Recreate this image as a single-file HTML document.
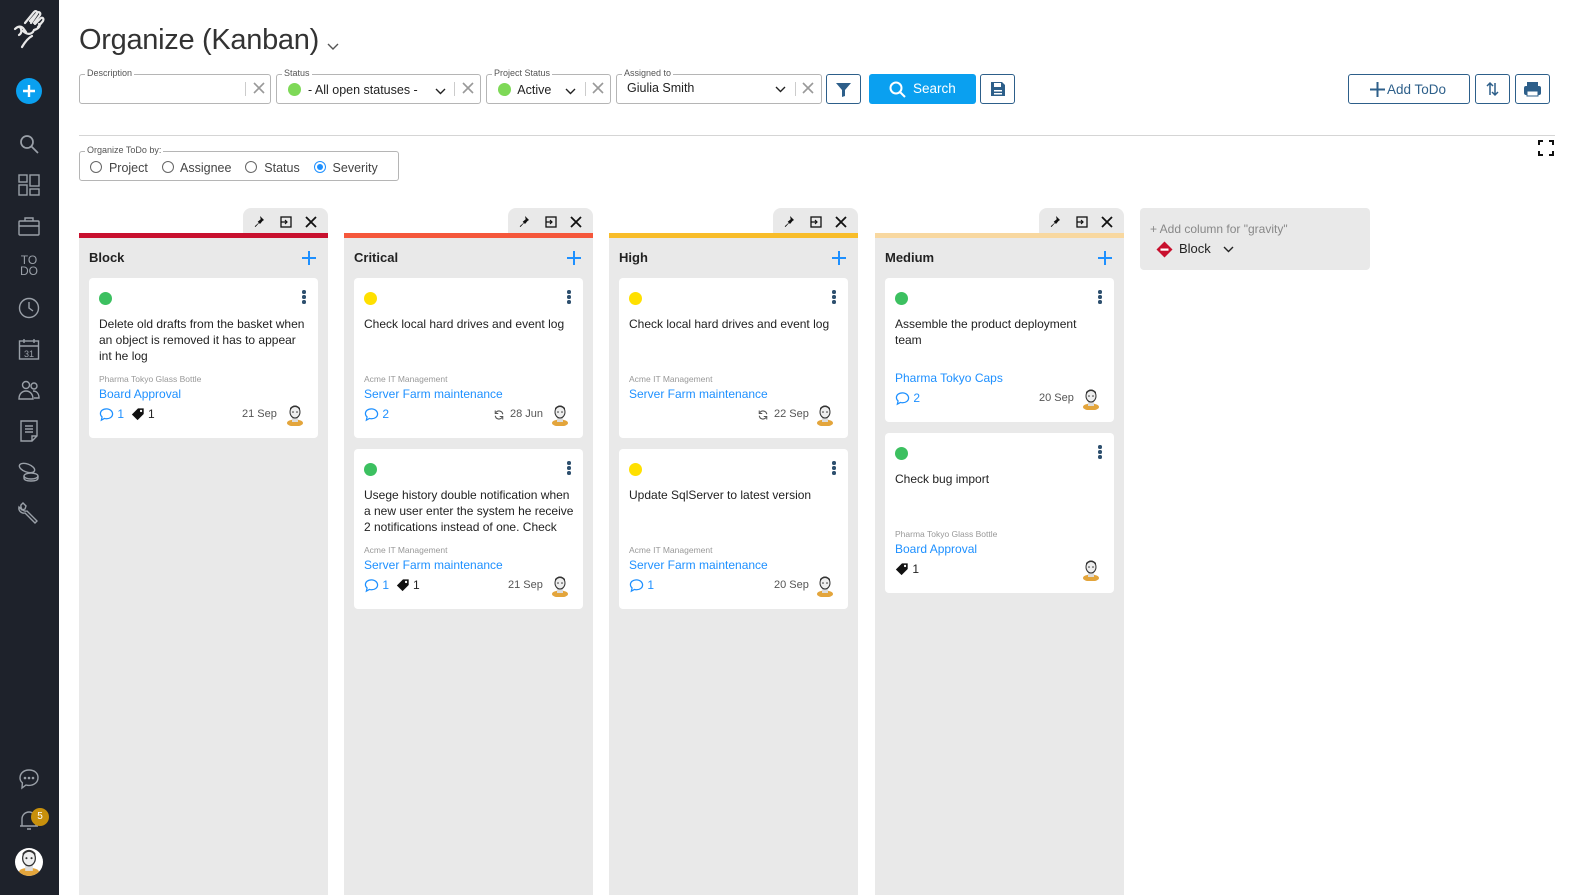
<!DOCTYPE html>
<html><head><meta charset="utf-8"><style>
*{box-sizing:border-box;margin:0;padding:0}
body{width:1572px;height:895px;overflow:hidden;background:#fff;font-family:"Liberation Sans",sans-serif;color:#222;position:relative}
.abs{position:absolute}
.side{left:0;top:0;width:59px;height:895px;background:#1e222b}
.si{position:absolute;left:18px;width:22px;height:22px}
.fld{position:absolute;top:74px;height:30px;border:1px solid #b5b5b5;border-radius:3px}
.fld .lb{position:absolute;top:-7px;left:5px;background:#fff;font-size:9px;color:#555;padding:0 2px;line-height:11px}
.fld .v{position:absolute;top:8px;font-size:12.5px;color:#222}
.gdot{display:inline-block;width:13px;height:13px;border-radius:50%;background:#7ed957;vertical-align:-2px}
.x{position:absolute;top:6px;width:14px;height:14px}
.sep{position:absolute;top:7px;width:1px;height:14px;background:#ccc}
.btn{position:absolute;top:74px;height:30px;border:1px solid #2d5f8a;border-radius:3px;background:#fff}
.col{position:absolute;top:233px;width:249px;height:662px;background:#e9e9e9}
.bar{position:absolute;left:0;top:0;width:249px;height:5px}
.tab{position:absolute;top:208px;width:85px;height:25px;background:#e9e9e9;border-radius:8px 8px 0 0}
.ch{position:absolute;left:10px;top:17px;font-size:13px;font-weight:bold;color:#222}
.cp{position:absolute;right:11px;top:17px;width:16px;height:16px}
.card{position:absolute;left:10px;width:229px;background:#fff;border-radius:4px}
.dot{position:absolute;left:10px;top:14px;width:13px;height:13px;border-radius:50%}
.keb{position:absolute;right:12px;top:12px;width:4px}
.keb i{display:block;width:3.5px;height:3.5px;border-radius:50%;background:#2d4f6e;margin-bottom:1.5px}
.tt{position:absolute;left:10px;top:38px;width:214px;font-size:12px;line-height:16px;color:#222}
.pj{position:absolute;left:10px;font-size:8.5px;color:#999}
.ln{position:absolute;left:10px;font-size:12px;color:#1e90ff}
.ft{position:absolute;left:10px;font-size:12px;color:#1e90ff;height:16px;display:flex;align-items:center}
.dt{position:absolute;font-size:11px;color:#555}
.av{position:absolute;right:14px;width:18px;height:22px}
.rd{display:inline-block;width:12px;height:12px;border:1px solid #666;border-radius:50%;vertical-align:-1px}
</style></head><body>
<svg width="0" height="0" style="position:absolute">
<defs>
<symbol id="av" viewBox="0 0 18 22"><ellipse cx="9" cy="19" rx="8" ry="3.5" fill="#e3a53c"/><rect x="6" y="13" width="6" height="5" fill="#ddd"/><ellipse cx="9" cy="8" rx="5" ry="6" fill="#eee" stroke="#333" stroke-width="1"/><path d="M4 6 Q9 0 14 6 L14 4 Q9 -1 4 4Z" fill="#333"/><circle cx="7" cy="8" r=".8" fill="#333"/><circle cx="11" cy="8" r=".8" fill="#333"/></symbol>
<symbol id="cm" viewBox="0 0 16 16"><path d="M8 2C4 2 1.5 4.3 1.5 7c0 1.5.7 2.7 1.8 3.6L2.5 14l3.3-1.8c.7.2 1.4.3 2.2.3 4 0 6.5-2.3 6.5-5S12 2 8 2z" fill="none" stroke="#1e90ff" stroke-width="1.3"/></symbol>
<symbol id="tag" viewBox="0 0 16 16"><path d="M8 1.5h6.5V8L7.5 15 1 8.5z" fill="#111"/><circle cx="11.5" cy="4.5" r="1.3" fill="#fff"/></symbol>
<symbol id="rf" viewBox="0 0 16 16"><path d="M13 7A5 5 0 0 0 3.8 5M3 9a5 5 0 0 0 9.2 2" fill="none" stroke="#555" stroke-width="1.4"/><path d="M3 2v4h4M13 14v-4H9" fill="none" stroke="#555" stroke-width="1.4"/></symbol>
<symbol id="xx" viewBox="0 0 14 14"><path d="M2 2L12 12M12 2L2 12" stroke="#999" stroke-width="1.6"/></symbol>
<symbol id="tabs" viewBox="0 0 85 25"><path d="M17 8l4 4-1.5 1-2.5 3-1 -1-3.5 4-.8-.8 4-3.5-1-1 3-2.5z" fill="#111"/><rect x="38" y="9" width="10" height="10" fill="none" stroke="#111" stroke-width="1.3"/><path d="M38 14h6M42 12l2 2-2 2" fill="none" stroke="#111" stroke-width="1.2"/><path d="M63 9L73 19M73 9L63 19" stroke="#111" stroke-width="1.8"/></symbol>
<symbol id="pl" viewBox="0 0 16 16"><path d="M8 1v14M1 8h14" stroke="#1e90ff" stroke-width="2"/></symbol>
</defs></svg>

<div class="abs side"></div>
<svg class="abs" style="left:9px;top:7px" width="42" height="42" viewBox="0 0 42 42" fill="none" stroke="#e8e8e8" stroke-width="2.2" stroke-linecap="round"><path d="M6 22c3-3 6-3 8-1l3 4M11 20c2 3 2 6-1 8M14 24c4 4 9 4 11-1M25 23c4-1 7-4 5-6M13 40c3-5 6-9 10-11M16 16L25 5c2-2 4 0 3 2L22 16M21 14l7-8c2-2 4 0 3 2l-6 8M26 17l6-6c2-1 3 1 2 3l-5 6"/></svg>
<div class="abs" style="left:16px;top:78px;width:26px;height:26px;border-radius:50%;background:#0aa0f0"></div>
<svg class="abs" style="left:16px;top:78px" width="26" height="26"><path d="M13 7v12M7 13h12" stroke="#fff" stroke-width="2.4"/></svg>
<svg class="si" style="top:133px" viewBox="0 0 22 22" fill="none" stroke="#9aa0a8" stroke-width="1.7"><circle cx="9" cy="9" r="6"/><path d="M13.5 13.5L20 20"/></svg>
<svg class="si" style="top:174px" viewBox="0 0 22 22" fill="none" stroke="#9aa0a8" stroke-width="1.4"><rect x="1" y="1" width="8" height="7"/><rect x="12" y="1" width="9" height="11"/><rect x="1" y="11" width="8" height="10"/><rect x="12" y="15" width="9" height="6"/></svg>
<svg class="si" style="top:215px" viewBox="0 0 22 22" fill="none" stroke="#9aa0a8" stroke-width="1.4"><rect x="1" y="6" width="20" height="14" rx="1"/><path d="M7 6V3h8v3M1 11h20"/></svg>
<div class="abs" style="left:18px;top:255px;font-size:12px;line-height:11px;color:#9aa0a8;text-align:center;width:22px">TO<br>DO</div>
<svg class="si" style="top:297px" viewBox="0 0 22 22" fill="none" stroke="#9aa0a8" stroke-width="1.4"><circle cx="11" cy="11" r="9.5"/><path d="M11 5v6l4 3"/></svg>
<svg class="si" style="top:338px" viewBox="0 0 22 22" fill="none" stroke="#9aa0a8" stroke-width="1.4"><rect x="1.5" y="3" width="19" height="18"/><path d="M1.5 8h19M6 1v4M16 1v4"/><text x="11" y="19" font-size="9" fill="#9aa0a8" stroke="none" text-anchor="middle" font-family="Liberation Sans">31</text></svg>
<svg class="si" style="top:379px" viewBox="0 0 22 22" fill="none" stroke="#9aa0a8" stroke-width="1.4"><circle cx="8" cy="6" r="3.5"/><circle cx="16" cy="7" r="3"/><path d="M1 20c0-5 3-8 7-8s7 3 7 8zM15 12c4 0 6 3 6 7h-5"/></svg>
<svg class="si" style="top:420px" viewBox="0 0 22 22" fill="none" stroke="#9aa0a8" stroke-width="1.4"><path d="M3 1h16v15l-5 5H3zM14 21v-5h5M7 6h8M7 9h8M7 12h8"/></svg>
<svg class="si" style="top:461px" viewBox="0 0 22 22" fill="none" stroke="#9aa0a8" stroke-width="1.4"><ellipse cx="9" cy="7" rx="8" ry="4" transform="rotate(20 9 7)"/><ellipse cx="13" cy="15" rx="7" ry="3"/><path d="M6 15v2c0 2 3 3 7 3s7-1 7-3v-2"/></svg>
<svg class="si" style="top:502px" viewBox="0 0 22 22" fill="none" stroke="#9aa0a8" stroke-width="1.4"><path d="M3 3a5 5 0 0 0 6 6l10 10-2 2L7 11A5 5 0 0 1 1 5l3 3 3-1 1-3-3-3z"/></svg>
<svg class="si" style="top:768px" viewBox="0 0 22 22" fill="none" stroke="#9aa0a8" stroke-width="1.4"><path d="M11 2C5.5 2 2 5.5 2 10c0 2 1 3.6 2.4 4.8L4 20l4-3c1 .3 2 .4 3 .4 5.5 0 9-3.4 9-7.8S16.5 2 11 2z"/><circle cx="7" cy="10" r=".6"/><circle cx="11" cy="10" r=".6"/><circle cx="15" cy="10" r=".6"/></svg>
<svg class="si" style="top:809px" viewBox="0 0 22 22" fill="none" stroke="#9aa0a8" stroke-width="1.4"><path d="M4 17V10a7 7 0 0 1 14 0v7zM2 17h18M9 20h4"/></svg>
<div class="abs" style="left:31px;top:808px;width:18px;height:18px;border-radius:50%;background:#c8900c;color:#fff;font-size:10px;text-align:center;line-height:18px">5</div>
<div class="abs" style="left:15px;top:848px;width:28px;height:28px;border-radius:50%;background:#fff;overflow:hidden"><svg width="28" height="28" viewBox="0 0 18 22"><use href="#av"/></svg></div>

<div class="abs" style="left:79px;top:24px;font-size:29px;color:#333;letter-spacing:-0.3px">Organize (Kanban)</div>
<svg class="abs" style="left:327px;top:42px" width="12" height="10"><path d="M1 2l5 5 5-5" fill="none" stroke="#555" stroke-width="1.4"/></svg>

<div class="fld" style="left:79px;width:192px"><span class="lb">Description</span><span class="sep" style="left:165px"></span><svg class="x" style="left:172px"><use href="#xx"/></svg></div>
<div class="fld" style="left:276px;width:205px"><span class="lb">Status</span><span class="v" style="left:11px"><span class="gdot"></span>&nbsp; - All open statuses -</span><svg class="abs" style="left:158px;top:13px" width="11" height="8"><path d="M1 1l4.5 4.5L10 1" fill="none" stroke="#222" stroke-width="1.4"/></svg><span class="sep" style="left:177px"></span><svg class="x" style="left:184px"><use href="#xx"/></svg></div>
<div class="fld" style="left:486px;width:125px"><span class="lb">Project Status</span><span class="v" style="left:11px"><span class="gdot"></span>&nbsp; Active</span><svg class="abs" style="left:78px;top:13px" width="11" height="8"><path d="M1 1l4.5 4.5L10 1" fill="none" stroke="#222" stroke-width="1.4"/></svg><span class="sep" style="left:98px"></span><svg class="x" style="left:104px"><use href="#xx"/></svg></div>
<div class="fld" style="left:616px;width:206px"><span class="lb">Assigned to</span><span class="v" style="left:10px;top:6px">Giulia Smith</span><svg class="abs" style="left:158px;top:11px" width="11" height="8"><path d="M1 1l4.5 4.5L10 1" fill="none" stroke="#222" stroke-width="1.4"/></svg><span class="sep" style="left:178px"></span><svg class="x" style="left:184px"><use href="#xx"/></svg></div>
<div class="btn" style="left:826px;width:35px"><svg width="33" height="28"><path d="M9 8h15l-6 7v6l-3 1v-7z" fill="#2d5f8a"/></svg></div>
<div class="abs" style="left:869px;top:74px;width:107px;height:30px;background:#0aa0f0;border-radius:3px;color:#fff;font-size:13.5px"><svg class="abs" style="left:20px;top:7px" width="17" height="17" fill="none" stroke="#fff" stroke-width="2"><circle cx="7" cy="7" r="5.5"/><path d="M11 11l5 5"/></svg><span class="abs" style="left:44px;top:7px">Search</span></div>
<div class="btn" style="left:980px;width:35px"><svg width="33" height="28"><path d="M10 7h11l3 3v11H10z" fill="#2d5f8a"/><rect x="13" y="8" width="7" height="4" fill="#fff"/><rect x="13" y="15" width="8" height="1.5" fill="#fff"/><rect x="13" y="18" width="8" height="1.5" fill="#fff"/></svg></div>
<div class="btn" style="left:1348px;width:122px;color:#2d5f8a;font-size:13.5px"><svg class="abs" style="left:21px;top:7px" width="15" height="15"><path d="M7.5 0v15M0 7.5h15" stroke="#2d5f8a" stroke-width="2"/></svg><span class="abs" style="left:38px;top:7px">Add ToDo</span></div>
<div class="btn" style="left:1475px;width:35px"><svg width="33" height="28"><path d="M14 20V8M11 11l3-3 3 3M19 8v12M16 17l3 3 3-3" fill="none" stroke="#2d5f8a" stroke-width="1.5"/></svg></div>
<div class="btn" style="left:1515px;width:35px"><svg width="33" height="28"><rect x="11" y="7" width="11" height="5" fill="#2d5f8a"/><rect x="8" y="11" width="17" height="9" rx="2" fill="#2d5f8a"/><rect x="11" y="16" width="11" height="5" fill="#fff" stroke="#2d5f8a"/></svg></div>

<div class="abs" style="left:79px;top:135px;width:1476px;height:1px;background:#d5d5d5"></div>
<svg class="abs" style="left:1538px;top:140px" width="16" height="16" fill="none" stroke="#111" stroke-width="2"><path d="M1 5V1h4M11 1h4v4M15 11v4h-4M5 15H1v-4"/></svg>

<div class="abs" style="left:79px;top:151px;width:320px;height:30px;border:1px solid #b5b5b5;border-radius:3px">
<span class="abs" style="left:5px;top:-7px;background:#fff;font-size:9px;color:#555;padding:0 2px">Organize ToDo by:</span>
<div class="abs" style="top:9px;left:10px;font-size:12.5px;color:#444;white-space:nowrap">
<span class="rd"></span>&nbsp; Project &nbsp;&nbsp; <span class="rd"></span>&nbsp; Assignee &nbsp;&nbsp; <span class="rd"></span>&nbsp; Status &nbsp;&nbsp; <span class="rd" style="border-color:#1e90ff;position:relative"><i style="position:absolute;left:2px;top:2px;width:6px;height:6px;border-radius:50%;background:#1e90ff"></i></span>&nbsp; Severity</div></div>

<div class="tab" style="left:243px"><svg width="85" height="25"><use href="#tabs"/></svg></div>
<div class="tab" style="left:508px"><svg width="85" height="25"><use href="#tabs"/></svg></div>
<div class="tab" style="left:773px"><svg width="85" height="25"><use href="#tabs"/></svg></div>
<div class="tab" style="left:1039px"><svg width="85" height="25"><use href="#tabs"/></svg></div>

<div class="col" style="left:79px"><div class="bar" style="background:#c8102e"></div><div class="ch">Block</div><svg class="cp"><use href="#pl"/></svg>
 <div class="card" style="top:45px;height:160px"><div class="dot" style="background:#3cc060"></div><div class="keb"><i></i><i></i><i></i></div>
  <div class="tt" style="width:206px">Delete old drafts from the basket when an object is removed it has to appear int he log</div>
  <div class="pj" style="top:96px">Pharma Tokyo Glass Bottle</div><div class="ln" style="top:109px">Board Approval</div>
  <div class="ft" style="top:128px"><svg width="15" height="15"><use href="#cm"/></svg>&nbsp;1&nbsp;&nbsp;<svg width="14" height="14"><use href="#tag"/></svg><span style="color:#222">&nbsp;1</span></div>
  <div class="dt" style="left:153px;top:130px">21 Sep</div><svg class="av" style="top:126px"><use href="#av"/></svg></div>
</div>

<div class="col" style="left:344px"><div class="bar" style="background:#f5573b"></div><div class="ch">Critical</div><svg class="cp"><use href="#pl"/></svg>
 <div class="card" style="top:45px;height:160px"><div class="dot" style="background:#ffe000"></div><div class="keb"><i></i><i></i><i></i></div>
  <div class="tt">Check local hard drives and event log</div>
  <div class="pj" style="top:96px">Acme IT Management</div><div class="ln" style="top:109px">Server Farm maintenance</div>
  <div class="ft" style="top:128px"><svg width="15" height="15"><use href="#cm"/></svg>&nbsp;2</div>
  <svg class="abs" style="left:139px;top:131px" width="12" height="12"><use href="#rf"/></svg><div class="dt" style="left:156px;top:130px">28 Jun</div><svg class="av" style="top:126px"><use href="#av"/></svg></div>
 <div class="card" style="top:216px;height:160px"><div class="dot" style="background:#3cc060"></div><div class="keb"><i></i><i></i><i></i></div>
  <div class="tt">Usege history double notification when a new user enter the system he receive 2 notifications instead of one. Check</div>
  <div class="pj" style="top:96px">Acme IT Management</div><div class="ln" style="top:109px">Server Farm maintenance</div>
  <div class="ft" style="top:128px"><svg width="15" height="15"><use href="#cm"/></svg>&nbsp;1&nbsp;&nbsp;<svg width="14" height="14"><use href="#tag"/></svg><span style="color:#222">&nbsp;1</span></div>
  <div class="dt" style="left:154px;top:130px">21 Sep</div><svg class="av" style="top:126px"><use href="#av"/></svg></div>
</div>

<div class="col" style="left:609px"><div class="bar" style="background:#f8bd2a"></div><div class="ch">High</div><svg class="cp"><use href="#pl"/></svg>
 <div class="card" style="top:45px;height:160px"><div class="dot" style="background:#ffe000"></div><div class="keb"><i></i><i></i><i></i></div>
  <div class="tt">Check local hard drives and event log</div>
  <div class="pj" style="top:96px">Acme IT Management</div><div class="ln" style="top:109px">Server Farm maintenance</div>
  <svg class="abs" style="left:138px;top:131px" width="12" height="12"><use href="#rf"/></svg><div class="dt" style="left:155px;top:130px">22 Sep</div><svg class="av" style="top:126px"><use href="#av"/></svg></div>
 <div class="card" style="top:216px;height:160px"><div class="dot" style="background:#ffe000"></div><div class="keb"><i></i><i></i><i></i></div>
  <div class="tt">Update SqlServer to latest version</div>
  <div class="pj" style="top:96px">Acme IT Management</div><div class="ln" style="top:109px">Server Farm maintenance</div>
  <div class="ft" style="top:128px"><svg width="15" height="15"><use href="#cm"/></svg>&nbsp;1</div>
  <div class="dt" style="left:155px;top:130px">20 Sep</div><svg class="av" style="top:126px"><use href="#av"/></svg></div>
</div>

<div class="col" style="left:875px"><div class="bar" style="background:#f8d8a0"></div><div class="ch">Medium</div><svg class="cp"><use href="#pl"/></svg>
 <div class="card" style="top:45px;height:144px"><div class="dot" style="background:#3cc060"></div><div class="keb"><i></i><i></i><i></i></div>
  <div class="tt" style="width:195px">Assemble the product deployment team</div>
  <div class="ln" style="top:93px">Pharma Tokyo Caps</div>
  <div class="ft" style="top:112px"><svg width="15" height="15"><use href="#cm"/></svg>&nbsp;2</div>
  <div class="dt" style="left:154px;top:114px">20 Sep</div><svg class="av" style="top:110px"><use href="#av"/></svg></div>
 <div class="card" style="top:200px;height:160px"><div class="dot" style="background:#3cc060"></div><div class="keb"><i></i><i></i><i></i></div>
  <div class="tt">Check bug import</div>
  <div class="pj" style="top:96px">Pharma Tokyo Glass Bottle</div><div class="ln" style="top:109px">Board Approval</div>
  <div class="ft" style="top:128px"><svg width="14" height="14"><use href="#tag"/></svg><span style="color:#222">&nbsp;1</span></div>
  <svg class="av" style="top:126px"><use href="#av"/></svg></div>
</div>

<div class="abs" style="left:1140px;top:208px;width:230px;height:62px;background:#e9e9e9;border-radius:4px">
 <div class="abs" style="left:10px;top:14px;font-size:12px;color:#888">+ Add column for "gravity"</div>
 <svg class="abs" style="left:16px;top:33px" width="17" height="17"><path d="M8.5 0.5L16.5 8.5 8.5 16.5 0.5 8.5z" fill="#c8102e"/><rect x="4.5" y="7.5" width="8" height="2.2" fill="#fff"/></svg>
 <div class="abs" style="left:39px;top:33px;font-size:13px;color:#222">Block</div>
 <svg class="abs" style="left:83px;top:38px" width="11" height="8"><path d="M1 1l4.5 4.5L10 1" fill="none" stroke="#222" stroke-width="1.4"/></svg>
</div>
</body></html>
